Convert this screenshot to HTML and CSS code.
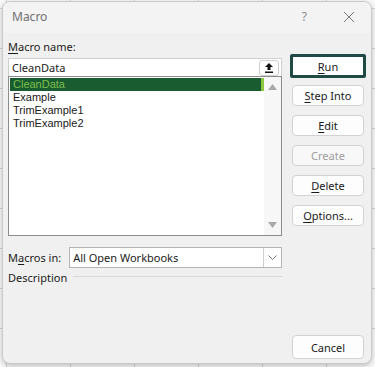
FILE: index.html
```html
<!DOCTYPE html>
<html lang="en">
<head>
    <meta charset="UTF-8">
    <title>Macro</title>
    <link rel="stylesheet" href="styles.css">
</head>
<body>
    <div class="dialog">
        <div class="title-bar">
            <span class="title">Macro</span>
            <span class="help">?</span>
            <svg class="close" width="12" height="12" viewBox="0 0 12 12">
                <path d="M1 1 L11 11 M11 1 L1 11" stroke="#7a7a7a" stroke-width="1" fill="none"/>
            </svg>
        </div>
        <div class="dialog-body">
            <div class="left-col">
                <label class="field-label"><u>M</u>acro name:</label>
                <div class="name-input">
                    <span class="name-value">CleanData</span>
                    <span class="up-btn">
                        <svg width="10" height="11" viewBox="0 0 10 11">
                            <path d="M5 1 L1 5 H3.5 V8 H6.5 V5 H9 Z" fill="#111"/>
                            <rect x="1" y="9.5" width="8" height="1.5" fill="#111"/>
                        </svg>
                    </span>
                </div>
                <div class="list-box">
                    <ul class="macro-list">
                        <li class="selected">CleanData</li>
                        <li>Example</li>
                        <li>TrimExample1</li>
                        <li>TrimExample2</li>
                    </ul>
                    <div class="scrollbar">
                        <svg width="9" height="6" viewBox="0 0 9 6"><path d="M4.5 0 L9 6 H0 Z" fill="#a8a8a8"/></svg>
                        <svg width="9" height="6" viewBox="0 0 9 6"><path d="M0 0 H9 L4.5 6 Z" fill="#a8a8a8"/></svg>
                    </div>
                </div>
                <div class="macros-in">
                    <span class="field-label">M<u>a</u>cros in:</span>
                    <div class="select-box">
                        <span class="select-value">All Open Workbooks</span>
                        <span class="select-btn">
                            <svg width="9" height="5" viewBox="0 0 9 5"><path d="M0.5 0.5 L4.5 4.5 L8.5 0.5" stroke="#777" stroke-width="1" fill="none"/></svg>
                        </span>
                    </div>
                </div>
                <div class="description">
                    <span class="field-label">Description</span>
                    <span class="rule"></span>
                </div>
            </div>
            <div class="right-col">
                <button class="btn default"><u>R</u>un</button>
                <button class="btn"><u>S</u>tep Into</button>
                <button class="btn"><u>E</u>dit</button>
                <button class="btn disabled">Create</button>
                <button class="btn"><u>D</u>elete</button>
                <button class="btn"><u>O</u>ptions...</button>
                <button class="btn cancel">Cancel</button>
            </div>
        </div>
    </div>
</body>
</html>
```

FILE: styles.css
```css
body {
    margin: 0;
    padding: 1px 4px 4px 2px;
    font-family: 'Noto Sans', sans-serif;
    font-size: 11px;
    color: #1a1a1a;
    background-color: #fbfbfb;
    background-image:
        linear-gradient(to right, #d6d6d6 1px, transparent 1px),
        linear-gradient(to bottom, #d6d6d6 1px, transparent 1px);
    background-size: 64px 40px;
    background-position: 6px 8px;
}
.dialog {
    width: 368px;
    height: 361px;
    background: #f0f0f0;
    border: 1px solid #c9c9c9;
    border-radius: 8px;
    box-shadow: 0 2px 6px rgba(0, 0, 0, 0.25);
    display: flex;
    flex-direction: column;
    overflow: hidden;
}
.title-bar {
    height: 31px;
    background: #f3f3f3;
    display: flex;
    align-items: center;
    padding: 0 0 2px 9px;
    box-sizing: border-box;
    flex-shrink: 0;
}
.title {
    flex: 1;
    color: #707070;
    font-size: 12px;
}
.help {
    color: #8a8a8a;
    font-size: 12px;
    margin-right: 36px;
}
.close {
    margin-right: 16px;
}
.dialog-body {
    flex: 1;
    display: flex;
    padding: 0 4px 4px 5px;
}
.left-col {
    width: 274px;
    display: flex;
    flex-direction: column;
}
.field-label {
    white-space: nowrap;
}
.left-col > .field-label {
    display: block;
    line-height: 16px;
    margin-top: 6px;
    margin-bottom: 3px;
}
u {
    text-decoration-thickness: 1px;
    text-underline-offset: 2px;
}
.name-input {
    height: 17px;
    background: #fff;
    border: 1px solid #cfcfcf;
    border-bottom: none;
    display: flex;
    align-items: center;
    padding-left: 3px;
}
.name-value {
    flex: 1;
}
.up-btn {
    width: 18px;
    height: 14px;
    border: 1px solid #cfcfcf;
    border-radius: 3px;
    background: #fff;
    display: flex;
    align-items: center;
    justify-content: center;
    margin-right: 2px;
}
.list-box {
    height: 158px;
    border: 1px solid #8c8c8c;
    background: #fff;
    display: flex;
}
.macro-list {
    list-style: none;
    margin: 0;
    padding: 1px 0 0 1px;
    flex: 1;
    font-family: 'Liberation Sans', sans-serif;
    font-size: 11px;
}
.macro-list li {
    height: 13px;
    line-height: 13px;
    padding-left: 3px;
}
.macro-list li.selected {
    background: #185c30;
    color: #7fbf4d;
    border-right: 3px solid #8dc63f;
}
.scrollbar {
    width: 17px;
    background: #f7f7f7;
    display: flex;
    flex-direction: column;
    justify-content: space-between;
    align-items: center;
    padding: 7px 0 7px;
}
.macros-in {
    display: flex;
    align-items: center;
    margin-top: 11px;
    gap: 8px;
}
.select-box {
    flex: 1;
    height: 19px;
    background: #fff;
    border: 1px solid #b4b4b4;
    display: flex;
    align-items: center;
    padding-left: 3px;
}
.select-value {
    flex: 1;
}
.select-btn {
    width: 17px;
    height: 19px;
    border-left: 1px solid #cfcfcf;
    display: flex;
    align-items: center;
    justify-content: center;
}
.description {
    display: flex;
    align-items: center;
    margin-top: 2px;
    gap: 6px;
}
.rule {
    flex: 1;
    height: 1px;
    background: #d8d8d8;
    margin-top: -2px;
}
.right-col {
    flex: 1;
    display: flex;
    flex-direction: column;
    align-items: flex-end;
    padding-top: 21px;
}
.btn {
    width: 72px;
    height: 21px;
    margin: 0 3px 9px 0;
    padding: 0;
    font-family: 'Noto Sans', sans-serif;
    font-size: 11px;
    color: #1a1a1a;
    background: #fdfdfd;
    border: 1px solid #d2d2d2;
    border-radius: 4px;
}
.btn.default {
    width: 76px;
    height: 24px;
    margin: 0 1px 7px 0;
    border: 3px solid #1e4b45;
    border-radius: 2px;
    background: #fff;
}
.btn.disabled {
    color: #9d9d9d;
    background: #f8f8f8;
}
.btn.cancel {
    height: 24px;
    margin-top: auto;
    margin-bottom: 0;
}
```
